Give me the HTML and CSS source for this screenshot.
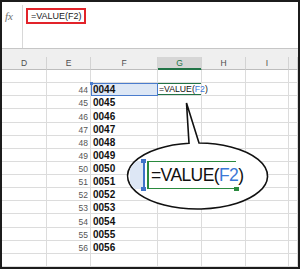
FILE: index.html
```html
<!DOCTYPE html>
<html>
<head>
<meta charset="utf-8">
<link rel="stylesheet" href="styles.css">
</head>
<body>
<div class="frame">
  <div class="fbar">
    <div class="fx">fx</div>
    <div class="finput"><div class="redbox">=VALUE(F2)</div></div>
  </div>
  <div class="band"></div>
  <div class="hdr">
    <div class="h">D</div><div class="h">E</div><div class="h">F</div><div class="h hsel">G</div><div class="h">H</div><div class="h">I</div><div class="h"></div>
  </div>
  <div class="row"><div class="c"></div><div class="c"></div><div class="c"></div><div class="c"></div><div class="c"></div><div class="c"></div><div class="c"></div></div>
  <div class="row"><div class="c"></div><div class="c num">44</div><div class="c val sel">0044</div><div class="c edit">=VALUE(<span class="ref">F2</span>)<span class="caret-s"></span></div><div class="c"></div><div class="c"></div><div class="c"></div></div>
  <div class="row"><div class="c"></div><div class="c num">45</div><div class="c val">0045</div><div class="c"></div><div class="c"></div><div class="c"></div><div class="c"></div></div>
  <div class="row"><div class="c"></div><div class="c num">46</div><div class="c val">0046</div><div class="c"></div><div class="c"></div><div class="c"></div><div class="c"></div></div>
  <div class="row"><div class="c"></div><div class="c num">47</div><div class="c val">0047</div><div class="c"></div><div class="c"></div><div class="c"></div><div class="c"></div></div>
  <div class="row"><div class="c"></div><div class="c num">48</div><div class="c val">0048</div><div class="c"></div><div class="c"></div><div class="c"></div><div class="c"></div></div>
  <div class="row"><div class="c"></div><div class="c num">49</div><div class="c val">0049</div><div class="c"></div><div class="c"></div><div class="c"></div><div class="c"></div></div>
  <div class="row"><div class="c"></div><div class="c num">50</div><div class="c val">0050</div><div class="c"></div><div class="c"></div><div class="c"></div><div class="c"></div></div>
  <div class="row"><div class="c"></div><div class="c num">51</div><div class="c val">0051</div><div class="c"></div><div class="c"></div><div class="c"></div><div class="c"></div></div>
  <div class="row"><div class="c"></div><div class="c num">52</div><div class="c val">0052</div><div class="c"></div><div class="c"></div><div class="c"></div><div class="c"></div></div>
  <div class="row"><div class="c"></div><div class="c num">53</div><div class="c val">0053</div><div class="c"></div><div class="c"></div><div class="c"></div><div class="c"></div></div>
  <div class="row"><div class="c"></div><div class="c num">54</div><div class="c val">0054</div><div class="c"></div><div class="c"></div><div class="c"></div><div class="c"></div></div>
  <div class="row"><div class="c"></div><div class="c num">55</div><div class="c val">0055</div><div class="c"></div><div class="c"></div><div class="c"></div><div class="c"></div></div>
  <div class="row"><div class="c"></div><div class="c num">56</div><div class="c val">0056</div><div class="c"></div><div class="c"></div><div class="c"></div><div class="c"></div></div>
  <div class="row"><div class="c"></div><div class="c"></div><div class="c"></div><div class="c"></div><div class="c"></div><div class="c"></div><div class="c"></div></div>
  <div class="row"><div class="c"></div><div class="c"></div><div class="c"></div><div class="c"></div><div class="c"></div><div class="c"></div><div class="c"></div></div>
</div>
<div class="callout">
  <svg class="bubble" width="146" height="112" viewBox="0 0 146 112">
    <path d="M74 43 A70 33 0 1 1 64 43.24 L61.5 3 Z" fill="#fff" stroke="#111" stroke-width="1.6" stroke-linejoin="miter"/>
  </svg>
  <div class="bigrow">
    <div class="bigf"></div>
    <div class="bigg">=VALUE(<span class="ref">F2</span>)<span class="caret-b"></span></div>
  </div>
</div>
</body>
</html>
```
FILE: styles.css
```css
body {
  margin: 0;
  width: 300px;
  height: 269px;
  position: relative;
  overflow: hidden;
  background: #fff;
  font-family: "Liberation Sans", Arial, sans-serif;
}
.frame {
  box-sizing: border-box;
  width: 300px;
  height: 269px;
  border: 2px solid #1c1c1c;
  overflow: hidden;
  display: flex;
  flex-direction: column;
}
.fbar {
  box-sizing: border-box;
  height: 47px;
  flex: none;
  border-bottom: 1px solid #c6c6c6;
  display: flex;
  background: #fff;
}
.fx {
  box-sizing: border-box;
  width: 21px;
  margin-top: 3px;
  padding: 5px 0 0 3px;
  border-right: 1px solid #d8d8d8;
  font-family: "Liberation Serif", serif;
  font-style: italic;
  font-size: 11px;
  line-height: 12px;
  color: #707070;
}
.finput {
  flex: 1;
  padding: 6px 0 0 3px;
}
.redbox {
  box-sizing: border-box;
  width: 60px;
  height: 16px;
  border: 2px solid #e2232a;
  display: flex;
  align-items: center;
  padding-left: 3px;
  font-size: 9px;
  color: #222;
  white-space: nowrap;
}
.band {
  height: 8px;
  flex: none;
  background: #efefef;
}
.hdr, .row {
  display: grid;
  grid-template-columns: 45px 44px 67px 44px 44px 43px 1fr;
  flex: none;
}
.hdr {
  height: 13px;
  background: #efefef;
}
.h {
  box-sizing: border-box;
  border-right: 1px solid #d3d3d3;
  border-bottom: 1px solid #bdbdbd;
  font-size: 8.5px;
  color: #4d4d4d;
  display: flex;
  align-items: center;
  justify-content: center;
}
.hsel {
  background: #d6d6d6;
  color: #217346;
  border-bottom-color: #217346;
  box-shadow: inset 0 -1px #217346;
}
.row {
  height: 13.14px;
}
.c {
  box-sizing: border-box;
  border-right: 1px solid #dcdcdc;
  border-bottom: 1px solid #dcdcdc;
  display: flex;
  align-items: flex-end;
  line-height: 10px;
  white-space: nowrap;
}
.num {
  justify-content: flex-end;
  padding-right: 2px;
  font-size: 8.5px;
  color: #555;
}
.val {
  padding-left: 2px;
  font-size: 10px;
  font-weight: bold;
  color: #111;
}
.sel {
  position: relative;
  background: #dde7f5;
  border-right-color: #4a7ccd;
  border-bottom-color: #4a7ccd;
  box-shadow: inset 1px 1px #4a7ccd;
}
.sel::before {
  content: "";
  position: absolute;
  left: -1px;
  top: -1px;
  width: 3px;
  height: 3px;
  background: #4a7ccd;
}
.edit {
  align-items: center;
  padding-left: 1px;
  font-size: 8.7px;
  color: #111;
  box-shadow: inset 0 1px #217346, inset 0 -1px #217346;
  overflow: visible;
}
.ref {
  color: #3b78d6;
}
.caret-s {
  display: inline-block;
  width: 1px;
  height: 10px;
  margin-left: 1px;
  background: #222;
}
.callout {
  position: absolute;
  left: 125px;
  top: 100px;
  width: 146px;
  height: 112px;
}
.bubble {
  position: absolute;
  left: 0;
  top: 0;
  overflow: visible;
}
.bigrow {
  position: relative;
  display: flex;
  margin: 61px 0 0 5px;
  height: 28px;
  clip-path: ellipse(69px 32px at 67.5px 15px);
}
.bigf {
  box-sizing: border-box;
  width: 15px;
  position: relative;
  background: #dde7f5;
  border-right: 2px solid #3f74c9;
}
.bigf::before,
.bigf::after {
  content: "";
  position: absolute;
  right: -3px;
  width: 5px;
  height: 4px;
  background: #3f74c9;
}
.bigf::before { top: -2px; }
.bigf::after { bottom: -2px; }
.bigg {
  box-sizing: border-box;
  width: 89px;
  margin-left: 2px;
  position: relative;
  border-left: 2px solid #2a8a3e;
  border-top: 1.5px solid #2a8a3e;
  border-bottom: 1.5px solid #2a8a3e;
  display: flex;
  align-items: center;
  padding-left: 2px;
  font-size: 17.5px;
  letter-spacing: -0.6px;
  color: #111;
  white-space: nowrap;
}
.bigg::after {
  content: "";
  position: absolute;
  right: -3px;
  bottom: -3px;
  width: 5px;
  height: 4px;
  background: #2a8a3e;
}
.caret-b {
  display: inline-block;
  width: 1.5px;
  height: 25px;
  margin-left: 3px;
  background: #111;
}
```
